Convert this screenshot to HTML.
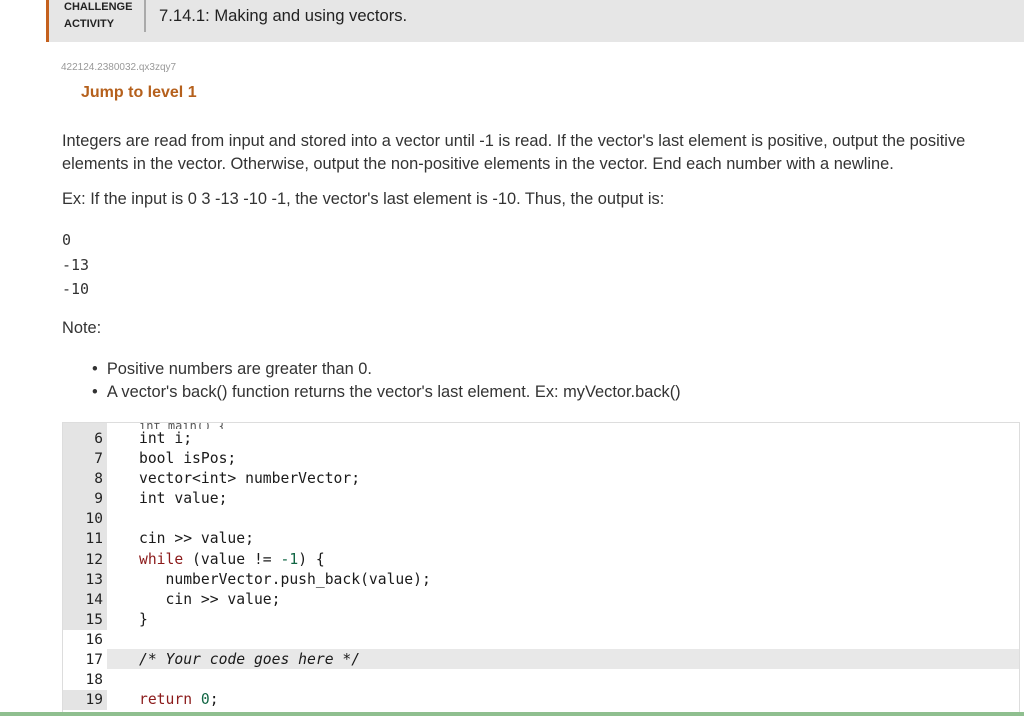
<!DOCTYPE html>
<html><head><style>
body{margin:0;width:1024px;height:716px;overflow:hidden;background:#fff;font-family:"Liberation Sans",sans-serif;position:relative}
.hdr{position:absolute;left:46px;top:0;width:978px;height:42px;background:#e6e6e6;border-left:3px solid #c4601d;box-sizing:border-box}
.ca{position:absolute;left:15px;top:-1px;font-size:11px;font-weight:bold;line-height:17px;color:#222}
.sep{position:absolute;left:95px;top:0;width:2px;height:32px;background:#aaa}
.ttl{position:absolute;left:110px;top:6px;font-size:16.6px;color:#222}
.abs{position:absolute}
.p{font-size:16.4px;color:#333;line-height:23px}
.mono{font-family:"DejaVu Sans Mono",monospace;font-size:15px;color:#333}
.ed{position:absolute;left:62px;top:422px;width:956px;height:292px;border:1px solid #ddd;border-bottom:none;overflow:hidden}
.gut{position:absolute;left:0;top:0;width:44px}
.ln{height:20.1px;line-height:20.1px;text-align:right;padding-right:4px;font-family:"DejaVu Sans Mono",monospace;font-size:14.5px;color:#222;box-sizing:border-box;width:44px}
.g{background:#e4e4e4}
.code{position:absolute;left:76px;top:0;font-family:"DejaVu Sans Mono",monospace;font-size:14.7px;color:#1a1a1a;white-space:pre}
.cl{height:20.1px;line-height:20.1px}
.k{color:#8b1a1a}.n{color:#116644}
</style></head><body>
<div class="hdr"><div class="ca">CHALLENGE<br>ACTIVITY</div><div class="sep"></div><div class="ttl">7.14.1: Making and using vectors.</div></div>
<div class="abs" style="left:61px;top:62px;font-size:10px;color:#999">422124.2380032.qx3zqy7</div>
<div class="abs" style="left:81px;top:84px;font-size:16px;font-weight:bold;color:#b5601c">Jump to level 1</div>
<div class="abs p" style="left:62px;top:130px;width:935px">Integers are read from input and stored into a vector until -1 is read. If the vector's last element is positive, output the positive elements in the vector. Otherwise, output the non-positive elements in the vector. End each number with a newline.</div>
<div class="abs p" style="left:62px;top:188px">Ex: If the input is 0 3 -13 -10 -1, the vector's last element is -10. Thus, the output is:</div>
<div class="abs mono" style="left:62px;top:228px;line-height:24.5px">0<br>-13<br>-10</div>
<div class="abs p" style="left:62px;top:317px">Note:</div>
<div class="abs p" style="left:92px;top:358px">•&nbsp;&nbsp;Positive numbers are greater than 0.<br>•&nbsp;&nbsp;A vector's back() function returns the vector's last element. Ex: myVector.back()</div>
<div class="ed">
<div class="abs" style="left:44px;top:226px;width:912px;height:20px;background:#e8e8e8"></div>
<div class="gut">
<div class="ln g" style="height:6px"></div>
<div class="ln g">6</div><div class="ln g">7</div><div class="ln g">8</div><div class="ln g">9</div><div class="ln g">10</div><div class="ln g">11</div><div class="ln g">12</div><div class="ln g">13</div><div class="ln g">14</div><div class="ln g">15</div><div class="ln">16</div><div class="ln">17</div><div class="ln">18</div><div class="ln g">19</div></div>
<div class="code"><div style="height:6px;overflow:hidden;line-height:6px;font-size:12px;color:#555">int main() {</div><div class="cl">int i;</div><div class="cl">bool isPos;</div><div class="cl">vector&lt;int&gt; numberVector;</div><div class="cl">int value;</div><div class="cl"> </div><div class="cl">cin &gt;&gt; value;</div><div class="cl"><span class="k">while</span> (value != <span class="n">-1</span>) {</div><div class="cl">   numberVector.push_back(value);</div><div class="cl">   cin &gt;&gt; value;</div><div class="cl">}</div><div class="cl"> </div><div class="cl" style="font-style:italic">/* Your code goes here */</div><div class="cl"> </div><div class="cl"><span class="k">return</span> <span class="n">0</span>;</div></div>
</div>
<div class="abs" style="left:0;top:712px;width:1024px;height:4px;background:#8fbf8f"></div>
</body></html>
